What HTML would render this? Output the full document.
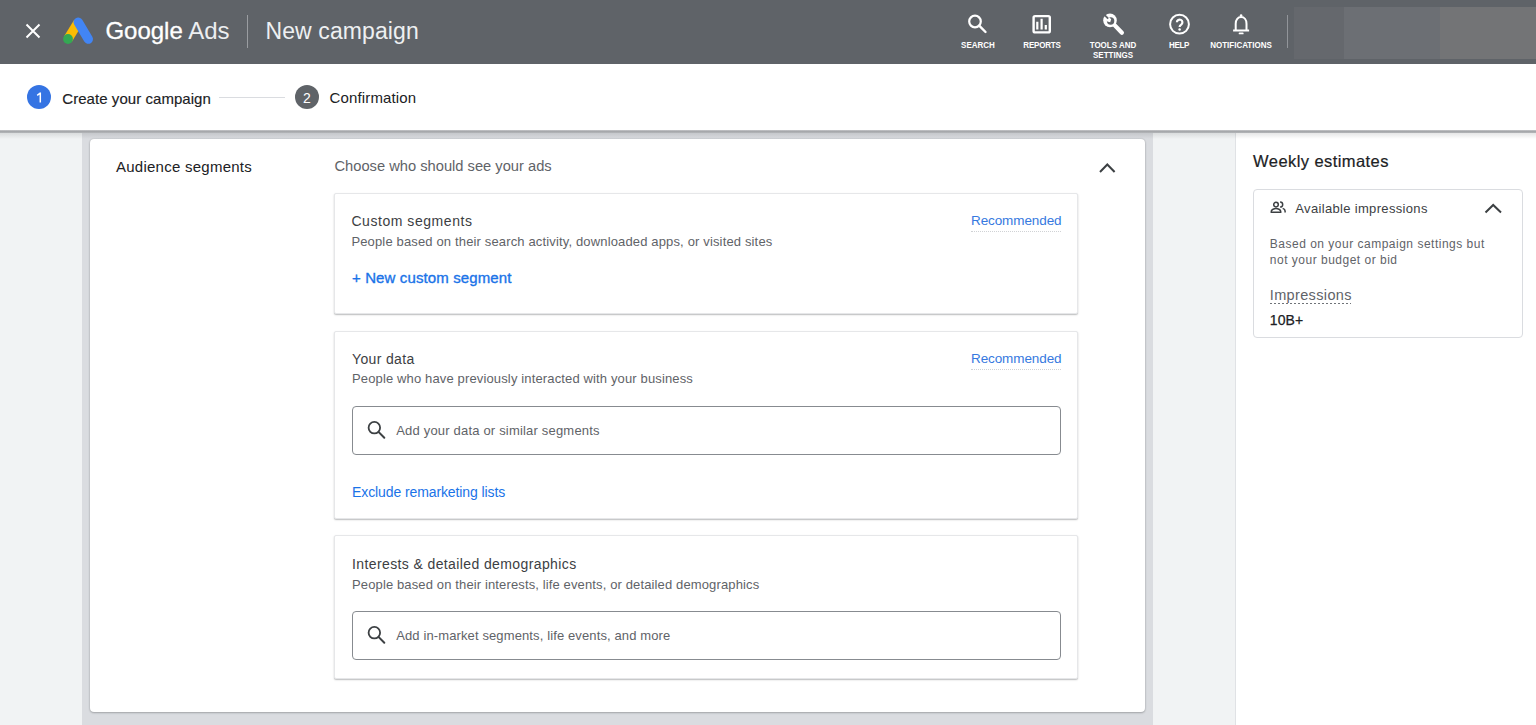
<!DOCTYPE html>
<html><head><meta charset="utf-8">
<style>
*{margin:0;padding:0;box-sizing:border-box}
html,body{width:1536px;height:725px;overflow:hidden;background:#f1f3f4;font-family:"Liberation Sans",sans-serif;position:relative}
.a{position:absolute;white-space:nowrap;line-height:normal}
#hdr{left:0;top:0;width:1536px;height:64px;background:#5f6368}
#step{left:0;top:64px;width:1536px;height:67px;background:#fff}
#stepsh{left:0;top:130px;width:1536px;height:3px;background:linear-gradient(#c6c7ca,#a6a8ab 50%,#b4b6b9)}
#dark{left:82px;top:133px;width:1071px;height:592px;background:#dadce0}
#rpanel{left:1235px;top:133px;width:301px;height:592px;background:#fff;border-left:1px solid #e0e2e5}
#card{left:90px;top:139px;width:1055px;height:573px;background:#fff;border-radius:4px;box-shadow:0 0 1.5px rgba(60,64,67,.3),0 1px 2px rgba(60,64,67,.3)}
.sub{position:absolute;left:334px;width:744px;background:#fff;border:1px solid #e6e7e9;border-radius:2px;box-shadow:0 1px 1.5px rgba(60,64,67,.35)}
.t1{color:#3c4043;font-size:14px}
.t2{color:#5f6368;font-size:13px}
.blue{color:#1a73e8}
.rec{font-size:13.5px;color:#3679e0}
.dots{position:absolute;height:1px;border-top:1px dotted #d0d2d5}
.box{position:absolute;left:352px;width:709px;height:49px;border:1.5px solid #878b90;border-radius:4px;background:#fff}
.nav{color:#fff;font-size:8px;font-weight:bold;text-align:center;line-height:9.4px;transform:scaleY(1.1);transform-origin:0 0}
</style></head>
<body>
<div id="hdr" class="a"></div>
<!-- close X -->
<svg class="a" style="left:24px;top:22px" width="18" height="18" viewBox="0 0 18 18"><path d="M2.5 2.5L15.5 15.5M15.5 2.5L2.5 15.5" stroke="#fff" stroke-width="2"/></svg>
<!-- logo -->
<svg class="a" style="left:60px;top:14px" width="36" height="34" viewBox="0 0 36 34">
<path d="M8 25 L18.2 8.2" stroke="#fbbc04" stroke-width="9.4"/>
<circle cx="8" cy="25" r="4.9" fill="#34a853"/>
<path d="M18.2 8.2 L28.3 25.1" stroke="#4285f4" stroke-width="9.4" stroke-linecap="round"/>
</svg>
<div class="a" style="left:105.4px;top:17px;color:#fff;font-size:24px"><span style="-webkit-text-stroke:0.3px #fff">Google</span> <span style="color:#eceef0">Ads</span></div>
<div class="a" style="left:247px;top:15px;width:1px;height:33px;background:#9a9da1"></div>
<div class="a" style="left:265.5px;top:18px;color:#eef0f2;font-size:23px;letter-spacing:0.1px">New campaign</div>

<!-- nav icons -->
<svg class="a" style="left:965px;top:12px" width="24" height="24" viewBox="0 0 24 24"><circle cx="10" cy="9.5" r="5.8" stroke="#fff" stroke-width="2.2" fill="none"/><path d="M14.2 13.7L20.5 20" stroke="#fff" stroke-width="2.4" stroke-linecap="round"/></svg>
<div class="a nav" style="left:954px;top:40.4px;width:48px">SEARCH</div>
<svg class="a" style="left:1030px;top:12px" width="24" height="24" viewBox="0 0 24 24"><rect x="3.6" y="4.1" width="16.2" height="16.3" rx="1.5" stroke="#fff" stroke-width="2.4" fill="none"/><path d="M7.3 17.6V9.7M11.6 17.6V6.8M15.8 17.6V12.9" stroke="#fff" stroke-width="2.2"/></svg>
<div class="a nav" style="left:1018px;top:40.4px;width:48px;letter-spacing:-0.2px">REPORTS</div>
<svg class="a" style="left:1101px;top:12px" width="24" height="24" viewBox="0 0 24 24"><circle cx="9" cy="8.4" r="6.8" fill="#fff"/><path d="M9 8.4L20.9 20.8" stroke="#fff" stroke-width="4.2" stroke-linecap="round"/><circle cx="9.6" cy="9" r="3.7" fill="#5f6368"/><path d="M5.3 6.5L7.4 4.4L10.2 7.2L9.2 10.2L6.2 9.4z" fill="#fff"/><path d="M3.4 2.8L7.2 6.6" stroke="#5f6368" stroke-width="1.9"/></svg>
<div class="a nav" style="left:1083px;top:40.4px;width:60px">TOOLS AND<br>SETTINGS</div>
<svg class="a" style="left:1168px;top:12px" width="24" height="24" viewBox="0 0 24 24"><circle cx="11.5" cy="12.2" r="9.4" stroke="#fff" stroke-width="2" fill="none"/><path d="M8.9 10.3a2.75 2.75 0 1 1 4.3 2.3c-.9.6-1.6 1.1-1.6 2.3" stroke="#fff" stroke-width="2.2" fill="none"/><circle cx="11.6" cy="17.6" r="1.25" fill="#fff"/></svg>
<div class="a nav" style="left:1155px;top:40.4px;width:48px;letter-spacing:-0.3px">HELP</div>
<svg class="a" style="left:1229px;top:12px" width="24" height="24" viewBox="0 0 24 24"><path d="M6.7 18.5V11.8C6.7 7.8 9 5.1 12.1 5.1S17.5 7.8 17.5 11.8V18.5" stroke="#fff" stroke-width="2" fill="none"/><path d="M4.1 18.5h16" stroke="#fff" stroke-width="2"/><circle cx="12.1" cy="3.6" r="1.3" fill="#fff"/><path d="M10.5 21.4h3.3" stroke="#fff" stroke-width="1.7" stroke-linecap="round"/></svg>
<div class="a nav" style="left:1206px;top:40.4px;width:70px">NOTIFICATIONS</div>
<div class="a" style="left:1286.5px;top:15px;width:1.5px;height:33px;background:#92959a"></div>
<div class="a" style="left:1294px;top:7px;width:50px;height:52px;background:#65686d"></div>
<div class="a" style="left:1344px;top:7px;width:96px;height:52px;background:#6c6f74"></div>
<div class="a" style="left:1440px;top:7px;width:96px;height:52px;background:#737476"></div>

<!-- stepper -->
<div id="step" class="a"></div>
<div class="a" style="left:27px;top:85px;width:24px;height:24px;border-radius:50%;background:#3574e3"></div>
<svg class="a" style="left:27px;top:85px" width="24" height="24" viewBox="0 0 24 24"><path d="M13.3 7.6V17.4M13.5 7.9L10.2 10.3" stroke="#fff" stroke-width="1.5" fill="none"/></svg>
<div class="a" style="left:62.3px;top:90px;color:#202124;font-size:15px;letter-spacing:0.05px;-webkit-text-stroke:0.15px #202124">Create your campaign</div>
<div class="a" style="left:219px;top:97px;width:66px;height:1px;background:#dadce0"></div>
<div class="a" style="left:295px;top:85px;width:24px;height:24px;border-radius:50%;background:#5f6368;color:#fff;font-size:14px;text-align:center;line-height:24px;padding-top:0.5px">2</div>
<div class="a" style="left:329.5px;top:89px;color:#202124;font-size:15px;letter-spacing:0.15px">Confirmation</div>
<div id="stepsh" class="a"></div>

<div id="dark" class="a"></div>
<div id="rpanel" class="a"></div>
<div class="a" style="left:0;top:133px;width:1536px;height:6px;background:linear-gradient(rgba(60,64,67,.13),rgba(60,64,67,0))"></div>

<!-- main card -->
<div id="card" class="a"></div>
<div class="a" style="left:116px;top:157.5px;color:#202124;font-size:15px;letter-spacing:0.25px">Audience segments</div>
<div class="a" style="left:334.5px;top:158px;color:#5f6368;font-size:14.7px;letter-spacing:0px">Choose who should see your ads</div>
<svg class="a" style="left:1097px;top:159px" width="20" height="16" viewBox="0 0 20 16"><path d="M3 13L10.3 5.5L17.6 13" stroke="#3c4043" stroke-width="2" fill="none"/></svg>

<!-- sub card 1 -->
<div class="sub" style="top:193px;height:121px"></div>
<div class="a t1" style="left:351.4px;top:213px;letter-spacing:0.55px">Custom segments</div>
<div class="a t2" style="left:351.4px;top:233.5px;letter-spacing:0.15px">People based on their search activity, downloaded apps, or visited sites</div>
<div class="a rec" style="left:971px;top:213px;letter-spacing:-0.1px">Recommended</div>
<div class="dots" style="left:971px;top:231px;width:90px"></div>
<div class="a blue" style="left:352px;top:269px;font-size:15px;letter-spacing:0.12px;-webkit-text-stroke:0.35px #1a73e8">+ New custom segment</div>

<!-- sub card 2 -->
<div class="sub" style="top:331px;height:188px"></div>
<div class="a t1" style="left:352px;top:351px;letter-spacing:0.35px">Your data</div>
<div class="a t2" style="left:352px;top:371px;letter-spacing:0.14px">People who have previously interacted with your business</div>
<div class="a rec" style="left:971px;top:351px;letter-spacing:-0.1px">Recommended</div>
<div class="dots" style="left:971px;top:369px;width:90px"></div>
<div class="box" style="top:406px"></div>
<svg class="a" style="left:365px;top:419px" width="24" height="24" viewBox="0 0 24 24"><circle cx="9.35" cy="8.7" r="5.75" stroke="#3c4043" stroke-width="1.8" fill="none"/><path d="M13.5 12.9L19.3 18.7" stroke="#3c4043" stroke-width="2" stroke-linecap="round"/></svg>
<div class="a t2" style="left:396.2px;top:423px;letter-spacing:0.19px">Add your data or similar segments</div>
<div class="a blue" style="left:352px;top:484px;font-size:14px;letter-spacing:-0.1px">Exclude remarketing lists</div>

<!-- sub card 3 -->
<div class="sub" style="top:535px;height:144px"></div>
<div class="a t1" style="left:352px;top:555.5px;letter-spacing:0.39px">Interests &amp; detailed demographics</div>
<div class="a t2" style="left:352px;top:576.5px;letter-spacing:0.13px">People based on their interests, life events, or detailed demographics</div>
<div class="box" style="top:611px"></div>
<svg class="a" style="left:365px;top:624px" width="24" height="24" viewBox="0 0 24 24"><circle cx="9.35" cy="8.7" r="5.75" stroke="#3c4043" stroke-width="1.8" fill="none"/><path d="M13.5 12.9L19.3 18.7" stroke="#3c4043" stroke-width="2" stroke-linecap="round"/></svg>
<div class="a t2" style="left:396.2px;top:628px;letter-spacing:0.12px">Add in-market segments, life events, and more</div>

<!-- right panel -->
<div class="a" style="left:1253.1px;top:151.5px;color:#202124;font-size:16.5px;letter-spacing:0.42px;-webkit-text-stroke:0.2px #202124">Weekly estimates</div>
<div class="a" style="left:1253px;top:189px;width:270px;height:149px;border:1px solid #dadce0;border-radius:4px"></div>
<svg class="a" style="left:1268px;top:198px" width="20" height="18" viewBox="0 0 20 18"><circle cx="8" cy="6.6" r="2.3" stroke="#3c4043" stroke-width="1.5" fill="none"/><path d="M3.3 14.2v-.9c0-1.8 3-2.8 4.7-2.8s4.7 1 4.7 2.8v.9z" stroke="#3c4043" stroke-width="1.5" fill="none"/><path d="M12.1 3.9a2.6 2.6 0 0 1 0 5.2" stroke="#3c4043" stroke-width="1.5" fill="none"/><path d="M14.7 10.4c1.4.5 2.4 1.3 2.4 2.5v1.7" stroke="#3c4043" stroke-width="1.5" fill="none"/></svg>
<div class="a" style="left:1295.3px;top:201px;color:#3c4043;font-size:13px;letter-spacing:0.33px">Available impressions</div>
<svg class="a" style="left:1483px;top:201px" width="20" height="14" viewBox="0 0 20 14"><path d="M2.5 11.5L10.2 4L18 11.5" stroke="#3c4043" stroke-width="2" fill="none"/></svg>
<div class="a" style="left:1269.8px;top:236px;color:#5f6368;font-size:12px;letter-spacing:0.5px;line-height:16px">Based on your campaign settings but<br>not your budget or bid</div>
<div class="a" style="left:1269.8px;top:287px;color:#5f6368;font-size:14.5px;letter-spacing:0.35px">Impressions</div>
<div class="a" style="left:1270px;top:303px;width:81px;height:1.3px;background:repeating-linear-gradient(90deg,#6f7378 0 2.2px,transparent 2.2px 4px)"></div>
<div class="a" style="left:1269.8px;top:312.3px;color:#202124;font-size:14px;letter-spacing:0.1px;-webkit-text-stroke:0.25px #202124">10B+</div>
</body></html>
